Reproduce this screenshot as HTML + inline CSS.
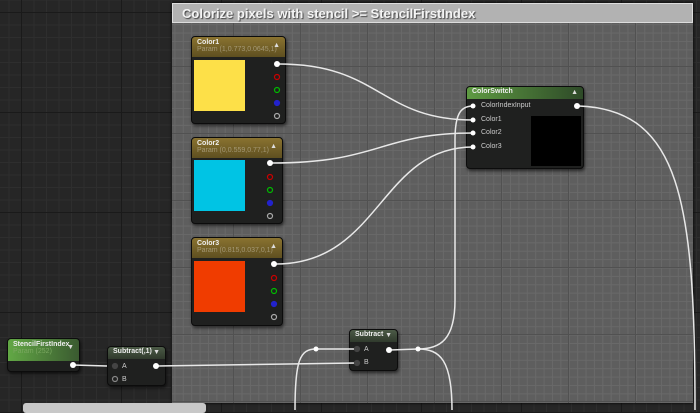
<!DOCTYPE html>
<html><head><meta charset="utf-8"><style>
*{margin:0;padding:0;box-sizing:border-box}
body{width:700px;height:410px;overflow:hidden;position:relative;font-family:"Liberation Sans",sans-serif;
background-color:#262626;
background-image:linear-gradient(90deg,#1a1a1a 1px,transparent 1px),linear-gradient(#1a1a1a 1px,transparent 1px),linear-gradient(90deg,#2e2e2e 1px,transparent 1px),linear-gradient(#2e2e2e 1px,transparent 1px);
background-size:100px 100px,100px 100px,12.5px 12.5px,12.5px 12.5px;background-position:21px 12px}
.cmt{position:absolute;left:172px;top:3px;width:521px;height:400px;background-color:#5e5e5e;
background-image:linear-gradient(90deg,#515151 1px,transparent 1px),linear-gradient(#515151 1px,transparent 1px),linear-gradient(90deg,#696969 1px,transparent 1px),linear-gradient(#696969 1px,transparent 1px);
background-size:67px 67px,67px 67px,8.4px 8.4px,8.4px 8.4px;background-position:-6px -4px;box-shadow:0 0 3px #000}
.ttl{position:absolute;left:172px;top:3px;width:521px;height:20px;background:#b2b2b2;border:1px solid #ddd;color:#f4f4f4;font-size:13px;font-weight:bold;padding:2px 9px;text-shadow:1px 1px 1px #444}
.node{position:absolute;background:#1f201f;border:1px solid #0c0c0c;border-radius:4px;box-shadow:1px 2px 3px rgba(0,0,0,.6);overflow:hidden}
.hd{color:#eee;font-size:7px;font-weight:bold;padding:2px 5px;position:relative}
.hd .s{font-weight:normal;display:block;color:rgba(255,255,255,.35)}
.gold{background:linear-gradient(#8a7330,#5e4f20)}
.grn{background:linear-gradient(90deg,#5e9a42,#2e4a28)}
.tri{position:absolute;right:5px;top:5px;color:#ddd;font-size:7px}
.sw{position:absolute}
.lbl{position:absolute;color:#ccc;font-size:7px}
svg{position:absolute;left:0;top:0}
</style></head><body>
<div class="cmt"></div>
<div class="ttl">Colorize pixels with stencil &gt;= StencilFirstIndex</div>

<div class="node" style="left:191px;top:36px;width:95px;height:88px"><div class="hd gold" style="height:20px">Color1<span class="s">Param (1,0.773,0.0645,1)</span><span class="tri">▲</span></div>
<div class="sw" style="left:2px;top:23px;width:51px;height:51px;background:#fde048"></div></div>
<div class="node" style="left:191px;top:137px;width:92px;height:87px"><div class="hd gold" style="height:20px">Color2<span class="s">Param (0,0.559,0.77,1)</span><span class="tri">▲</span></div>
<div class="sw" style="left:2px;top:22px;width:51px;height:51px;background:#00c4e4"></div></div>
<div class="node" style="left:191px;top:237px;width:92px;height:89px"><div class="hd gold" style="height:20px">Color3<span class="s">Param (0.815,0.037,0,1)</span><span class="tri">▲</span></div>
<div class="sw" style="left:2px;top:23px;width:51px;height:51px;background:#f03c00"></div></div>

<div class="node" style="left:466px;top:86px;width:118px;height:83px"><div class="hd grn" style="height:12px;padding-top:1px">ColorSwitch<span class="tri" style="top:2px">▲</span></div>
<div class="sw" style="left:64px;top:29px;width:50px;height:50px;background:#000"></div>
<div class="lbl" style="left:14px;top:15px">ColorIndexInput</div>
<div class="lbl" style="left:14px;top:29px">Color1</div>
<div class="lbl" style="left:14px;top:42px">Color2</div>
<div class="lbl" style="left:14px;top:56px">Color3</div></div>

<div class="node" style="left:7px;top:338px;width:73px;height:34px"><div class="hd grn" style="height:22px;background:linear-gradient(90deg,#62a845,#3a5a30)">StencilFirstIndex<span class="s" style="color:#7aa860">Param (252)</span><span class="tri">▼</span></div></div>
<div class="node" style="left:107px;top:346px;width:59px;height:40px"><div class="hd grn" style="height:12px;padding-top:1px;background:linear-gradient(#4b5a46,#303a2d)">Subtract(,1)<span class="tri" style="top:2px">▼</span></div>
<div class="lbl" style="left:14px;top:16px">A</div><div class="lbl" style="left:14px;top:29px">B</div></div>
<div class="node" style="left:349px;top:329px;width:49px;height:42px"><div class="hd grn" style="height:12px;padding-top:1px;background:linear-gradient(#4b5a46,#303a2d)">Subtract<span class="tri" style="top:2px">▼</span></div>
<div class="lbl" style="left:14px;top:16px">A</div><div class="lbl" style="left:14px;top:29px">B</div></div>

<div style="position:absolute;left:23px;top:403px;width:183px;height:10px;background:#c8c8c8;border-radius:3px"></div>

<svg width="700" height="410" fill="none" stroke="#e8e8e8" stroke-width="1.5">
<path d="M279 64 C380 64 380 120 473 120"/>
<path d="M272 163 C380 163 380 133 473 133"/>
<path d="M276 264 C380 264 380 147 473 147"/>
<path d="M579 106 C680 110 695 200 695 410"/>
<path d="M390 350 L418 349 C440 349 455 340 455 300 L455 140 C455 115 460 106 473 106"/>
<path d="M418 349 C440 349 452 360 452 410"/>
<path d="M316 349 L355 349"/>
<path d="M316 349 C300 349 295 360 295 410"/>
<path d="M157 366 L355 363"/>
<path d="M73 365 L107 366"/>
<g fill="#fff" stroke="none">
<circle cx="277" cy="64" r="3"/><circle cx="270" cy="163" r="3"/><circle cx="274" cy="264" r="3"/>
<circle cx="473" cy="106" r="2.5"/><circle cx="473" cy="120" r="2.5"/><circle cx="473" cy="133" r="2.5"/><circle cx="473" cy="147" r="2.5"/>
<circle cx="577" cy="106" r="3"/><circle cx="389" cy="350" r="3"/><circle cx="418" cy="349" r="2.5"/><circle cx="316" cy="349" r="2.5"/>
<circle cx="156" cy="366" r="3"/><circle cx="73" cy="365" r="3"/></g>
<g stroke-width="1.2"><circle cx="277" cy="77" r="2.5" stroke="#c00"/><circle cx="277" cy="90" r="2.5" stroke="#0b0"/><circle cx="277" cy="103" r="2.5" stroke="#22c" fill="#22c"/><circle cx="277" cy="116" r="2.5" stroke="#aaa"/>
<circle cx="270" cy="177" r="2.5" stroke="#c00"/><circle cx="270" cy="190" r="2.5" stroke="#0b0"/><circle cx="270" cy="203" r="2.5" stroke="#22c" fill="#22c"/><circle cx="270" cy="216" r="2.5" stroke="#aaa"/>
<circle cx="274" cy="278" r="2.5" stroke="#c00"/><circle cx="274" cy="291" r="2.5" stroke="#0b0"/><circle cx="274" cy="304" r="2.5" stroke="#22c" fill="#22c"/><circle cx="274" cy="317" r="2.5" stroke="#aaa"/>
<circle cx="115" cy="366" r="2.5" stroke="#444" fill="#444"/><circle cx="115" cy="379" r="2.5" stroke="#888"/>
<circle cx="357" cy="349" r="2.5" stroke="#444" fill="#444"/><circle cx="357" cy="363" r="2.5" stroke="#444" fill="#444"/></g>
</svg>
</body></html>
